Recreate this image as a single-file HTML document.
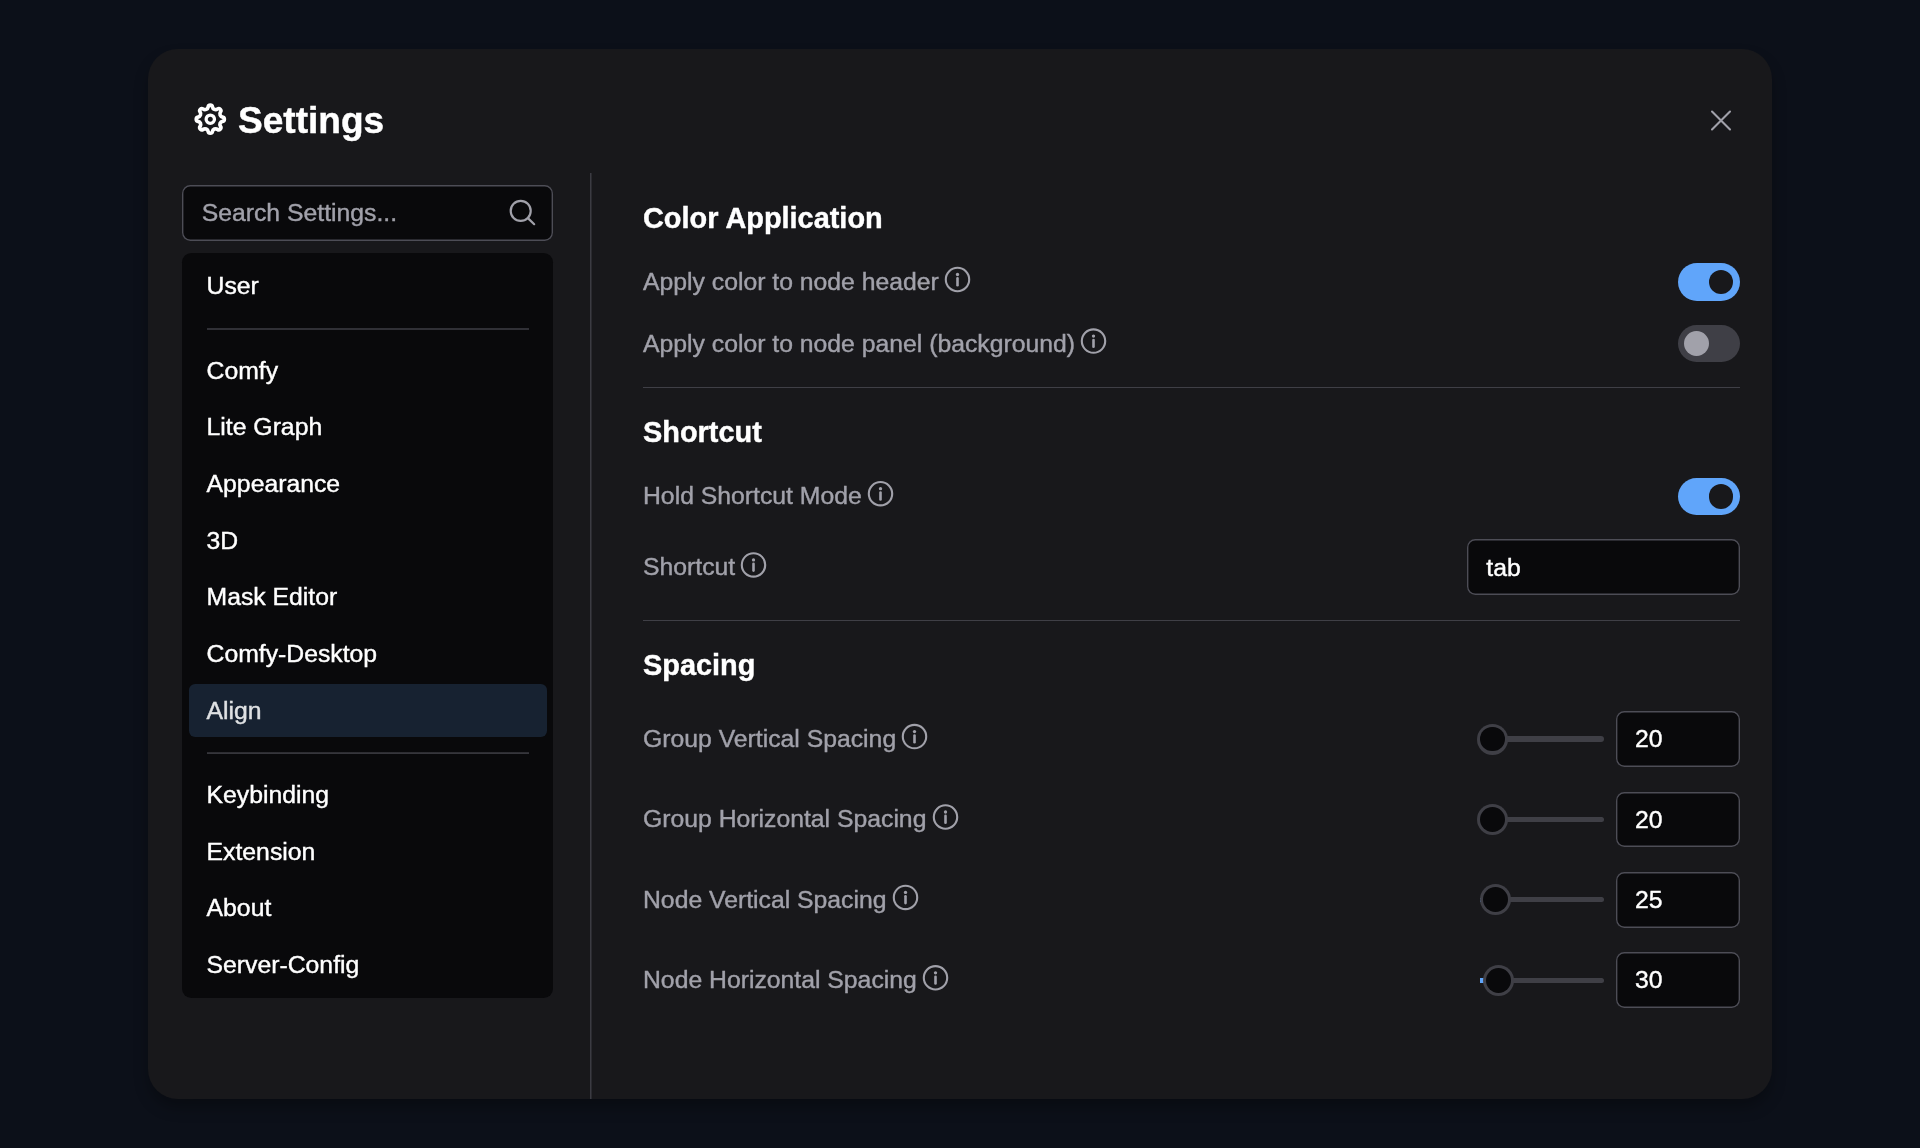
<!DOCTYPE html><html><head><meta charset="utf-8"><title>Settings</title><style>
*{box-sizing:border-box;margin:0;padding:0}
html,body{width:1920px;height:1148px;overflow:hidden}
body{background:#0c1019;font-family:"Liberation Sans",sans-serif;font-size:24.75px;color:#fff;position:relative;-webkit-text-stroke:0.42px}
#wrap{position:absolute;left:0;top:0;width:1920px;height:1148px;will-change:transform}
#dlg{position:absolute;left:148.4px;top:48.9px;width:1623.2px;height:1049.9px;background:#18181b;border-radius:30px;
 box-shadow:0 9px 15px -1px rgba(0,0,0,.30)}
#title{position:absolute;left:238px;top:98.6px;font-size:37.05px;font-weight:bold;line-height:43px;white-space:nowrap}
#gear{position:absolute;left:190px;top:99px;width:40px;height:40px;overflow:visible}
#close{position:absolute;left:1709px;top:108px;width:24px;height:24px;overflow:visible}
#search{position:absolute;left:182.4px;top:185px;width:370.7px;height:56px;background:#09090b;box-shadow:inset 0 0 0 1.4px #4d4d56;border-radius:8.2px}
#search span{position:absolute;left:19.3px;top:13.6px;line-height:28.5px;color:#a1a1aa;white-space:nowrap}
#sicon{position:absolute;left:505px;top:195px;width:34px;height:34px;overflow:visible}
#list{position:absolute;left:182.4px;top:253.3px;width:370.7px;height:744.5px;background:#09090b;border-radius:9.3px}
.mi{position:absolute;left:188.6px;width:358.3px;height:53.2px;border-radius:6.2px;padding-left:18px;line-height:53.2px;white-space:nowrap;color:#fff}
.mi.up{line-height:51.2px}
.mi.sel{background:#172231;color:#dfe1e3}
.ldiv{position:absolute;left:207px;width:321.5px;height:2px;background:#303036}
#vsep{position:absolute;left:590px;top:173px;width:2px;height:925.8px;background:linear-gradient(90deg,#3b3b42 50%,#2a2a2f 50%)}
h3{position:absolute;left:643px;font-size:28.9px;font-weight:bold;line-height:34px;white-space:nowrap}
.row{position:absolute;left:643px;line-height:28.5px;color:#a1a1aa;white-space:nowrap}
.row svg{position:relative;display:inline-block;vertical-align:top;width:26px;height:26px;margin-left:5.3px;top:-2.1px;overflow:visible}
.hdiv{position:absolute;left:643px;width:1096.7px;height:1px;background:#3f3f46}
.tog{position:absolute;left:1677.7px;width:62px;height:37.2px;border-radius:19px}
.tog i{position:absolute;top:6.2px;width:24.8px;height:24.8px;border-radius:50%}
.tog.on{background:#60a5fa}.tog.on i{left:31px;background:#18181b}
.tog.off{background:#3f3f46}.tog.off i{left:6.2px;background:#a1a1aa}
.inp{position:absolute;height:55.8px;background:#09090b;box-shadow:inset 0 0 0 1.4px #4d4d56;border-radius:8.2px;color:#fff;padding-left:18.9px;line-height:55.8px;white-space:nowrap}
.trk{position:absolute;left:1480px;width:123.5px;height:5.2px;background:#3f3f46;border-radius:3px}
.rng{position:absolute;left:1480px;height:4.65px;background:#60a5fa}
.hnd{position:absolute;width:31px;height:31px;border-radius:50%;background:#3f3f46}
.hnd:before{content:"";position:absolute;left:3.1px;top:3.1px;width:24.8px;height:24.8px;border-radius:50%;background:#09090b}
</style></head><body>
<div id="wrap">
<div id="dlg"></div>
<svg id="gear" viewBox="-20.3 -20.2 40 40"><path d="M-2.117 -12.276A2.150 2.150 0 0 1 2.117 -12.276A3.254 3.254 0 0 0 7.184 -10.177A2.150 2.150 0 0 1 10.177 -7.184A3.254 3.254 0 0 0 12.276 -2.117A2.150 2.150 0 0 1 12.276 2.117A3.254 3.254 0 0 0 10.177 7.184A2.150 2.150 0 0 1 7.184 10.177A3.254 3.254 0 0 0 2.117 12.276A2.150 2.150 0 0 1 -2.117 12.276A3.254 3.254 0 0 0 -7.184 10.177A2.150 2.150 0 0 1 -10.177 7.184A3.254 3.254 0 0 0 -12.276 2.117A2.150 2.150 0 0 1 -12.276 -2.117A3.254 3.254 0 0 0 -10.177 -7.184A2.150 2.150 0 0 1 -7.184 -10.177A3.254 3.254 0 0 0 -2.117 -12.276Z" fill="none" stroke="#fff" stroke-width="3.7" stroke-linejoin="round"/><circle r="4.15" fill="none" stroke="#fff" stroke-width="3.3"/></svg>
<div id="title">Settings</div>
<svg id="close" viewBox="0 -0.5 24 24"><path d="M3 3L21 21M21 3L3 21" stroke="#a1a1aa" stroke-width="2.1" stroke-linecap="round" fill="none"/></svg>
<div id="search"><span>Search Settings...</span></div>
<svg id="sicon" viewBox="0 0 34 34"><circle cx="15.7" cy="15.9" r="10" fill="none" stroke="#a1a1aa" stroke-width="2.2"/><path d="M22.9 23.1L29.2 29.2" stroke="#a1a1aa" stroke-width="2.2" stroke-linecap="round"/></svg>
<div id="list"></div>
<div class="mi up" style="top:259.7px">User</div>
<div class="mi" style="top:343.8px">Comfy</div>
<div class="mi up" style="top:400.5px">Lite Graph</div>
<div class="mi" style="top:457.2px">Appearance</div>
<div class="mi" style="top:513.9px">3D</div>
<div class="mi up" style="top:570.6px">Mask Editor</div>
<div class="mi" style="top:627.3px">Comfy-Desktop</div>
<div class="mi sel" style="top:684.0px">Align</div>
<div class="mi" style="top:768.3px">Keybinding</div>
<div class="mi" style="top:825.0px">Extension</div>
<div class="mi up" style="top:881.7px">About</div>
<div class="mi" style="top:938.4px">Server-Config</div>
<div class="ldiv" style="top:328px"></div><div class="ldiv" style="top:752px;background:linear-gradient(#29292e,#3a3a41)"></div>
<div id="vsep"></div>
<h3 style="top:200.9px">Color Application</h3>
<div class="row" style="top:268px">Apply color to node header<svg style="top:-2px" viewBox="-13.5 -13.50 26 26"><circle r="11.7" fill="none" stroke="#a1a1aa" stroke-width="2.1"/><circle cy="-5" r="1.65" fill="#a1a1aa"/><path d="M0 -1.1V5.7" stroke="#a1a1aa" stroke-width="2.6" stroke-linecap="round" fill="none"/></svg></div>
<div class="tog on" style="top:263.4px"><i></i></div>
<div class="row" style="top:330px">Apply color to node panel (background)<svg style="top:-2px" viewBox="-13.5 -13.10 26 26"><circle r="11.7" fill="none" stroke="#a1a1aa" stroke-width="2.1"/><circle cy="-5" r="1.65" fill="#a1a1aa"/><path d="M0 -1.1V5.7" stroke="#a1a1aa" stroke-width="2.6" stroke-linecap="round" fill="none"/></svg></div>
<div class="tog off" style="top:325.0px"><i></i></div>
<div class="hdiv" style="top:387px"></div>
<h3 style="top:415.0px">Shortcut</h3>
<div class="row" style="top:482px">Hold Shortcut Mode<svg style="top:-2px" viewBox="-13.5 -13.70 26 26"><circle r="11.7" fill="none" stroke="#a1a1aa" stroke-width="2.1"/><circle cy="-5" r="1.65" fill="#a1a1aa"/><path d="M0 -1.1V5.7" stroke="#a1a1aa" stroke-width="2.6" stroke-linecap="round" fill="none"/></svg></div>
<div class="tog on" style="top:477.6px"><i></i></div>
<div class="row" style="top:553px">Shortcut<svg style="top:-2px" viewBox="-13.5 -13.90 26 26"><circle r="11.7" fill="none" stroke="#a1a1aa" stroke-width="2.1"/><circle cy="-5" r="1.65" fill="#a1a1aa"/><path d="M0 -1.1V5.7" stroke="#a1a1aa" stroke-width="2.6" stroke-linecap="round" fill="none"/></svg></div>
<div class="inp" style="left:1467.4px;width:272.4px;top:539.4px;line-height:57.8px">tab</div>
<div class="hdiv" style="top:620px"></div>
<h3 style="top:648.2px">Spacing</h3>
<div class="row" style="top:725px">Group Vertical Spacing<svg style="top:-2px" viewBox="-13.5 -13.60 26 26"><circle r="11.7" fill="none" stroke="#a1a1aa" stroke-width="2.1"/><circle cy="-5" r="1.65" fill="#a1a1aa"/><path d="M0 -1.1V5.7" stroke="#a1a1aa" stroke-width="2.6" stroke-linecap="round" fill="none"/></svg></div>
<div class="trk" style="top:736.40px"></div>
<div class="rng" style="top:736.80px;width:12.4px"></div>
<div class="hnd" style="left:1476.9px;top:723.6px"></div>
<div class="inp" style="left:1616.2px;width:123.6px;top:711.2px">20</div>
<div class="row" style="top:805px">Group Horizontal Spacing<svg style="top:-1px" viewBox="-13.5 -13.00 26 26"><circle r="11.7" fill="none" stroke="#a1a1aa" stroke-width="2.1"/><circle cy="-5" r="1.65" fill="#a1a1aa"/><path d="M0 -1.1V5.7" stroke="#a1a1aa" stroke-width="2.6" stroke-linecap="round" fill="none"/></svg></div>
<div class="trk" style="top:816.80px"></div>
<div class="rng" style="top:817.20px;width:12.4px"></div>
<div class="hnd" style="left:1476.9px;top:804.0px"></div>
<div class="inp" style="left:1616.2px;width:123.6px;top:791.6px">20</div>
<div class="row" style="top:886px">Node Vertical Spacing<svg style="top:-2px" viewBox="-13.5 -13.40 26 26"><circle r="11.7" fill="none" stroke="#a1a1aa" stroke-width="2.1"/><circle cy="-5" r="1.65" fill="#a1a1aa"/><path d="M0 -1.1V5.7" stroke="#a1a1aa" stroke-width="2.6" stroke-linecap="round" fill="none"/></svg></div>
<div class="trk" style="top:897.20px"></div>
<div class="rng" style="top:897.60px;width:15.5px"></div>
<div class="hnd" style="left:1480.0px;top:884.4px"></div>
<div class="inp" style="left:1616.2px;width:123.6px;top:872.0px">25</div>
<div class="row" style="top:966px">Node Horizontal Spacing<svg style="top:-2px" viewBox="-13.5 -13.80 26 26"><circle r="11.7" fill="none" stroke="#a1a1aa" stroke-width="2.1"/><circle cy="-5" r="1.65" fill="#a1a1aa"/><path d="M0 -1.1V5.7" stroke="#a1a1aa" stroke-width="2.6" stroke-linecap="round" fill="none"/></svg></div>
<div class="trk" style="top:977.60px"></div>
<div class="rng" style="top:978.00px;width:18.6px"></div>
<div class="hnd" style="left:1483.1px;top:964.8px"></div>
<div class="inp" style="left:1616.2px;width:123.6px;top:952.4px">30</div>
</div></body></html>
